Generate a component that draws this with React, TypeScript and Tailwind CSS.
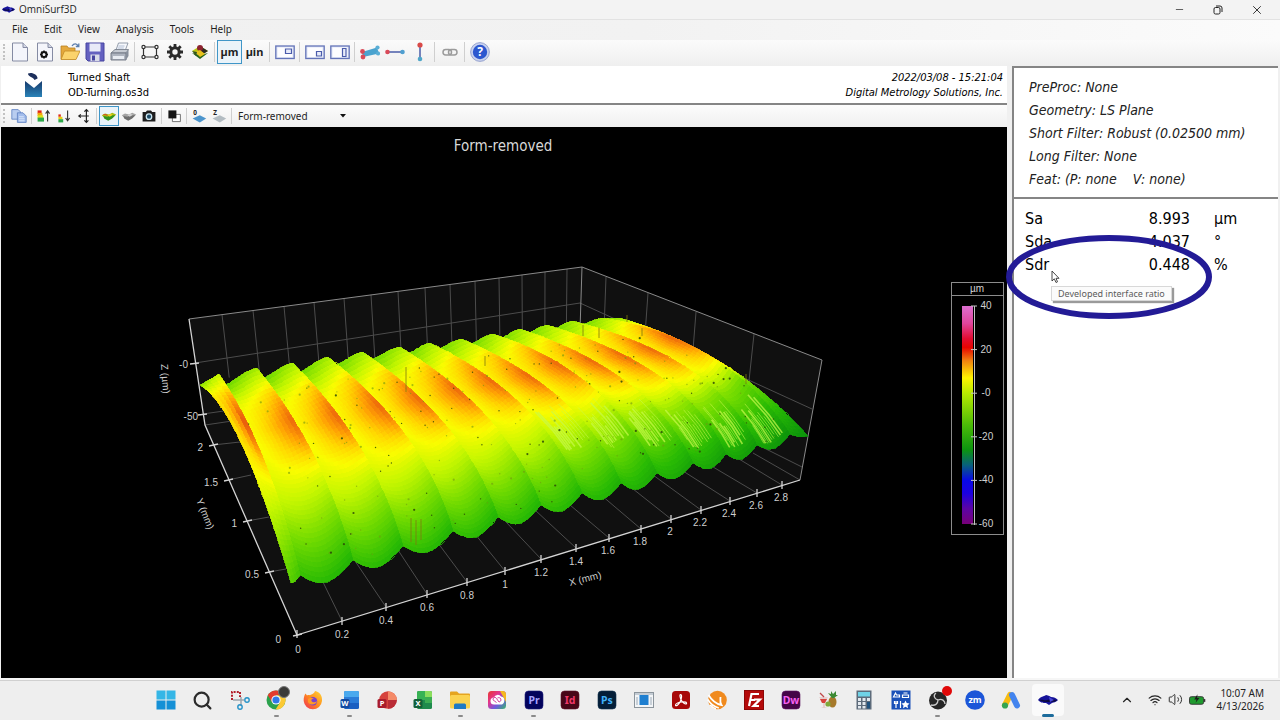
import { ReactNode } from "react";
import clsx from "clsx";
import { Minus, X, ChevronUp, Wifi, Volume2, Search } from "lucide-react";

const MENUS = ["File", "Edit", "View", "Analysis", "Tools", "Help"];

type Point = [number, number];

/* ---------- surface plot ---------- */

// back end, middle and front end of every crest line, left to right
const CRESTS: [Point, Point, Point][] = [
  [[200, 385], [243, 447], [291, 583]],
  [[219, 374], [264, 460], [300, 575]],
  [[257, 368], [314, 456], [353, 560]],
  [[293, 363], [361, 449], [403, 546]],
  [[328, 357], [407, 437], [453, 531]],
  [[363, 352], [448, 428], [498, 517]],
  [[400, 347], [488, 418], [541, 505]],
  [[430, 343], [524, 407], [582, 493]],
  [[462, 339], [563, 401], [621, 483]],
  [[493, 334], [592, 387], [657, 473]],
  [[520, 329], [629, 384], [693, 463]],
  [[547, 325], [662, 378], [726, 454]],
  [[573, 321], [690, 370], [757, 445]],
  [[603, 318], [711, 357], [790, 434]],
  [[620, 318], [722, 363], [808, 436]],
];

const RAMP: [number, number[]][] = [
  [-28, [14, 150, 10]],
  [-21, [40, 186, 4]],
  [-13, [112, 218, 0]],
  [-5, [196, 246, 0]],
  [1, [250, 252, 0]],
  [6, [255, 216, 0]],
  [12, [255, 160, 4]],
  [21, [230, 84, 14]],
];

const ALONG: Point[] = [
  [0, -9],
  [0.06, -5],
  [0.14, 1],
  [0.3, 4],
  [0.45, 2],
  [0.55, -1],
  [0.7, -7],
  [0.85, -14],
  [1, -21],
];

const BACK_TOPS = [222, 253, 284, 314, 344, 371, 398, 425, 450, 475, 499, 522, 545, 567];

const X_TICKS: { x: number; y: number; fx: number; fy: number; label: string }[] = [
  { x: 342, y: 621, fx: 322, fy: 580, label: "0.2" },
  { x: 386, y: 607, fx: 353, fy: 558, label: "0.4" },
  { x: 427, y: 594, fx: 398, fy: 550, label: "0.6" },
  { x: 467, y: 582, fx: 438, fy: 543, label: "0.8" },
  { x: 505, y: 571, fx: 475, fy: 534, label: "1" },
  { x: 541, y: 559, fx: 506, fy: 522, label: "1.2" },
  { x: 576, y: 548, fx: 535, fy: 510, label: "1.4" },
  { x: 609, y: 538, fx: 570, fy: 505, label: "1.6" },
  { x: 641, y: 529, fx: 601, fy: 495, label: "1.8" },
  { x: 671, y: 519, fx: 628, fy: 485, label: "2" },
  { x: 701, y: 510, fx: 653, fy: 475, label: "2.2" },
  { x: 730, y: 501, fx: 683, fy: 471, label: "2.4" },
  { x: 757, y: 493, fx: 708, fy: 464, label: "2.6" },
  { x: 782, y: 485, fx: 734, fy: 456, label: "2.8" },
];

const Y_TICKS: { x: number; y: number; fx: number; fy: number; label: string }[] = [
  { x: 297, y: 635, fx: 297, fy: 635, label: "0" },
  { x: 269, y: 572, fx: 286, fy: 569, label: "0.5" },
  { x: 247, y: 521, fx: 269, fy: 517, label: "1" },
  { x: 228, y: 480, fx: 251, fy: 475, label: "1.5" },
  { x: 213, y: 445, fx: 240, fy: 442, label: "2" },
];

const LEGEND_TICKS = ["40", "20", "-0", "-20", "-40", "-60"];

function noise(n: number) {
  const s = Math.sin(n * 127.1 + 11.7) * 43758.5453;
  return s - Math.floor(s);
}

function crestPoint(i: number, v: number): Point {
  const [a, m, b] = CRESTS[i];
  const at = (k: 0 | 1) => {
    const c = 2 * m[k] - (a[k] + b[k]) / 2;
    return (1 - v) * (1 - v) * a[k] + 2 * v * (1 - v) * c + v * v * b[k];
  };
  return [at(0), at(1)];
}

function surfacePoint(i: number, u: number, v: number): Point {
  const [x0, y0] = crestPoint(i, v);
  const [x1, y1] = crestPoint(i + 1, v);
  const edge = i === 0 || i === 13;
  // the groove starts behind the crest on its left and climbs to the one on its right
  const drop = edge ? 0 : 13 - i * 0.6;
  const front = edge ? 2 : 15 - i * 0.5;
  const hang = drop * Math.pow(1 - v, 1.5) * (1 + Math.cos(Math.PI * u)) * 0.5;
  const sag = front * v * Math.sin(Math.PI * u);
  return [x0 + (x1 - x0) * u, y0 + (y1 - y0) * u + hang + sag];
}

function interpolate(v: number, table: Point[]) {
  for (let k = 1; k < table.length; k++) {
    if (v <= table[k][0]) {
      const [a, fa] = table[k - 1];
      const [b, fb] = table[k];
      return fa + ((v - a) / (b - a)) * (fb - fa);
    }
  }
  return table[table.length - 1][1];
}

function heightAt(i: number, u: number, v: number) {
  const warm = Math.exp(-Math.pow((v - 0.31) / 0.18, 2));
  const side = i === 13 ? 0.9 : u;
  let h = interpolate(v, ALONG);
  h += warm * (18 * Math.pow(side, 1.5) - 3);
  if (v < 0.2) h -= (1 - u) * 6 * (1 - v / 0.2);
  if (v > 0.5) h += (0.5 - u) * 3 * Math.min(1, (v - 0.5) * 5);
  if (i > 6 && v > 0.5) h -= (i - 6) * Math.min(1, (v - 0.5) * 6);
  if (i === 0) h += 4;
  return h;
}

function rampColor(h: number) {
  const clamped = Math.max(-28, Math.min(21, h));
  for (let k = 1; k < RAMP.length; k++) {
    if (clamped <= RAMP[k][0]) {
      const [a, ca] = RAMP[k - 1];
      const [b, cb] = RAMP[k];
      const t = (clamped - a) / (b - a);
      return `rgb(${ca.map((c, n) => Math.round(c + (cb[n] - c) * t)).join(",")})`;
    }
  }
  return "rgb(230,84,14)";
}

function buildSurface() {
  const rows = 50;
  const cells: { d: string; fill: string }[] = [];
  for (let i = CRESTS.length - 2; i >= 0; i--) {
    const cols = i === 0 || i === 13 ? 4 : 12;
    for (let r = 0; r < rows; r++) {
      for (let c = 0; c < cols; c++) {
        const corners = [
          surfacePoint(i, c / cols, r / rows),
          surfacePoint(i, (c + 1) / cols, r / rows),
          surfacePoint(i, (c + 1) / cols, (r + 1) / rows),
          surfacePoint(i, c / cols, (r + 1) / rows),
        ];
        cells.push({
          d: corners.map((p) => p.map((n) => n.toFixed(1)).join(",")).join(" "),
          fill: rampColor(heightAt(i, (c + 0.5) / cols, (r + 0.5) / rows)),
        });
      }
    }
  }
  return cells;
}

function buildSpecks() {
  return Array.from({ length: 240 }, (_, n) => {
    const i = 1 + Math.floor(noise(n) * 12);
    const v = 0.12 + noise(n + 300) * 0.84;
    const [x, y] = surfacePoint(i, noise(n + 600) * 0.9 + 0.08, v);
    return { x, y, r: noise(n + 900) > 0.8 ? 1.1 : 0.7, dark: noise(n + 1200) > 0.6 };
  });
}

// pale scratches running down the right hand grooves
function buildScratches() {
  const out: { d: string; w: number }[] = [];
  for (let i = 7; i <= 12; i++) {
    for (let s = 0; s < 11; s++) {
      const u = 0.3 + s * 0.058;
      const shift = (i - 7) * 0.05;
      const from = 0.48 + shift + noise(i * 31 + s) * 0.14;
      const to = 0.69 + shift + noise(i * 57 + s) * 0.05;
      const pts = [from, (from + to) / 2, to].map((v) => surfacePoint(i, u, Math.min(v, 0.97)));
      out.push({
        d: "M" + pts.map((p) => p.map((n) => n.toFixed(1)).join(" ")).join("L"),
        w: noise(i * 13 + s) > 0.5 ? 1.6 : 0.8,
      });
    }
  }
  return out;
}

const SURFACE = buildSurface();
const SPECKS = buildSpecks();
const SCRATCHES = buildScratches();
const SPIKES = [
  [406, 367, 392],
  [485, 356, 366],
  [583, 325, 336],
  [599, 328, 338],
  [642, 328, 336],
  [627, 315, 322],
  [746, 374, 384],
  [411, 518, 542],
  [416, 520, 545],
  [421, 519, 540],
];

function SurfacePlot() {
  return (
    <svg
      viewBox="1 127 1006 551"
      className="block h-full w-full font-['Liberation_Sans',sans-serif]"
      role="img"
      aria-label="Form-removed surface"
    >
      <defs>
        <linearGradient id="scale" x1="0" y1="0" x2="0" y2="1">
          <stop offset="0" stopColor="#dd6fd0" />
          <stop offset="0.08" stopColor="#e0459c" />
          <stop offset="0.15" stopColor="#e00c30" />
          <stop offset="0.19" stopColor="#e60400" />
          <stop offset="0.25" stopColor="#f08010" />
          <stop offset="0.33" stopColor="#fff400" />
          <stop offset="0.4" stopColor="#b8ea00" />
          <stop offset="0.55" stopColor="#48ba08" />
          <stop offset="0.66" stopColor="#0c9410" />
          <stop offset="0.73" stopColor="#08607c" />
          <stop offset="0.8" stopColor="#0808e8" />
          <stop offset="0.86" stopColor="#1c00e0" />
          <stop offset="0.93" stopColor="#5c04a4" />
          <stop offset="1" stopColor="#780078" />
        </linearGradient>
      </defs>
      <text
        x="503"
        y="151"
        fill="#d8d8d8"
        fontSize="15"
        textAnchor="middle"
        className="font-['DejaVu_Sans_Condensed','Noto_Sans',sans-serif]"
      >
        Form-removed
      </text>

      <polygon points="189,319 582,267 822,360 800,480 297,635 205,425" fill="#101010" />
      <g stroke="#4c4c4c" strokeWidth="1">
        {BACK_TOPS.map((x) => {
          const t = (x - 189) / 393;
          return <line key={x} x1={x} y1={319 - 52 * t} x2={x + 9 * (1 - t) - 1} y2={382 - 52 * t} />;
        })}
        <line x1="195" y1="363" x2="580" y2="303" />
        <line x1="203" y1="414" x2="300" y2="400" />
        <line x1="205" y1="425" x2="300" y2="411" />
        <line x1="580" y1="303" x2="812" y2="409" />
        <line x1="606" y1="277" x2="604" y2="330" />
        <line x1="648" y1="293" x2="645" y2="335" />
        <line x1="696" y1="312" x2="693" y2="350" />
        <line x1="754" y1="334" x2="748" y2="390" />
        <line x1="760" y1="446" x2="802" y2="467" />
        <line x1="753" y1="453" x2="800" y2="480" />
        {X_TICKS.map((t) => (
          <line key={t.label} x1={t.fx} y1={t.fy} x2={t.x} y2={t.y} />
        ))}
        {Y_TICKS.map((t) => (
          <line key={t.label} x1={t.fx} y1={t.fy} x2={t.x} y2={t.y} />
        ))}
      </g>
      <g stroke="#8a8a8a" fill="none">
        <polyline points="189,319 582,267 822,360 800,480" />
        <line x1="582" y1="267" x2="580" y2="330" />
      </g>
      <g stroke="#d4d4d4" fill="none" strokeWidth="1.3">
        <polyline points="189,319 205,425 297,635 800,480" />
        <path d="M190 364l9 -1M198 415l9 -1" />
        {X_TICKS.map((t) => (
          <line key={t.label} x1={t.x} y1={t.y - 4} x2={t.x} y2={t.y + 4} />
        ))}
        <line x1="297" y1="630" x2="297" y2="638" />
        {Y_TICKS.map((t) => (
          <line key={t.label} x1={t.x - 4} y1={t.y + 1} x2={t.x + 5} y2={t.y - 1} />
        ))}
      </g>

      <g strokeWidth="0.8" shapeRendering="crispEdges">
        {SURFACE.map((c, n) => (
          <polygon key={n} points={c.d} fill={c.fill} stroke={c.fill} />
        ))}
      </g>
      <g fill="none" stroke="#c8fa4c" opacity="0.7">
        {SCRATCHES.map((s, n) => (
          <path key={n} d={s.d} strokeWidth={s.w} />
        ))}
      </g>
      {SPECKS.map((s, n) => (
        <circle key={n} cx={s.x} cy={s.y} r={s.r} fill={s.dark ? "#2c4a08" : "#6f9a10"} opacity={s.dark ? 0.85 : 0.6} />
      ))}
      <g stroke="#7d7a10" strokeWidth="0.8">
        {SPIKES.map(([x, y1, y2]) => (
          <line key={x} x1={x} y1={y1} x2={x} y2={y2} />
        ))}
      </g>

      <g fill="#cfcfcf" fontSize="10" textAnchor="middle">
        {X_TICKS.map((t, n) => (
          <text key={t.label} x={n > 6 ? t.x - 1 : t.x} y={n > 6 ? t.y + 16 : t.y + 17}>
            {t.label}
          </text>
        ))}
        <text x="298" y="653">
          0
        </text>
        <g textAnchor="end">
          {Y_TICKS.map((t) => (
            <text key={t.label} x={t.x - (t.label === "0" ? 16 : 10)} y={t.y + (t.label === "0" ? 8 : 6)}>
              {t.label}
            </text>
          ))}
          <text x="188" y="368">
            -0
          </text>
          <text x="198" y="420">
            -50
          </text>
        </g>
        <text transform="translate(162 379) rotate(86)">Z (µm)</text>
        <text transform="translate(202 515) rotate(68)">Y (mm)</text>
        <text transform="translate(586 582) rotate(-14)">X (mm)</text>
      </g>

      <g stroke="#8c8c8c" fill="none">
        <rect x="951.5" y="282.5" width="52" height="252" />
        <line x1="952" y1="295.5" x2="1003" y2="295.5" />
      </g>
      <rect x="962" y="306" width="11" height="218" fill="url(#scale)" />
      <g stroke="#c4c4c4">
        <line x1="974.5" y1="306" x2="974.5" y2="525" />
        {LEGEND_TICKS.map((label, n) => (
          <line key={label} x1="971" y1={306 + n * 43.6} x2="977" y2={306 + n * 43.6} />
        ))}
      </g>
      <g fill="#d0d0d0" fontSize="10" textAnchor="middle">
        <text x="977" y="292">
          µm
        </text>
        {LEGEND_TICKS.map((label, n) => (
          <text key={label} x="986" y={309 + n * 43.6}>
            {label}
          </text>
        ))}
      </g>
    </svg>
  );
}

/* ---------- toolbar glyphs ---------- */

function Glyph({ children, size = 20 }: { children: ReactNode; size?: number }) {
  return (
    <svg viewBox="0 0 20 20" width={size} height={size} className="block shrink-0" aria-hidden="true">
      {children}
    </svg>
  );
}

const page = (
  <>
    <path d="M2.5 1h10.5l4.500 4.500V19h-15z" fill="#f4f5fb" stroke="#858ba3" />
    <path d="M13 1v4.500h4.500" fill="#d5d8e6" stroke="#858ba3" />
  </>
);

const paneWindow = (
  <>
    <rect x="0.8" y="4" width="18.400" height="12.500" fill="#dfe5f6" stroke="#6474b8" strokeWidth="1.300" />
    <rect x="2.500" y="5.500" width="15" height="9.500" fill="#fdfdff" />
  </>
);

const gear = (
  <>
    <circle cx="10" cy="10" r="4.200" fill="none" stroke="#2a2a2a" strokeWidth="3" />
    <path
      d="M10 2v3M10 15v3M2 10h3M15 10h3M4.300 4.300l2.200 2.200M13.500 13.500l2.200 2.200M15.700 4.300l-2.200 2.200M6.500 13.500l-2.200 2.200"
      stroke="#2a2a2a"
      strokeWidth="2.800"
    />
  </>
);

const MAIN_TOOLS: ({ name: string; icon: ReactNode; active?: boolean } | null)[] = [
  { name: "New", icon: page },
  {
    name: "New from settings",
    icon: (
      <>
        {page}
        <circle cx="9" cy="12.500" r="2.500" fill="none" stroke="#111" strokeWidth="2" />
        <path
          d="M9 8.500v2M9 14.500v2M5 12.500h2M11 12.500h2M6.200 9.700l1.400 1.400M10.400 13.900l1.400 1.400M11.800 9.700l-1.400 1.400M7.600 13.900l-1.400 1.400"
          stroke="#111"
          strokeWidth="1.600"
        />
      </>
    ),
  },
  {
    name: "Open",
    icon: (
      <>
        <path d="M1 4h6l1.500 2H15v11H1z" fill="#e5a93c" stroke="#b98022" strokeWidth="0.8" />
        <path d="M4.500 9H20l-4 8.500H1z" fill="#fbd36c" stroke="#c28a26" strokeWidth="0.8" />
        <path d="M12 4c2-3 5-2.500 6 0M18.800 1.500V4.500h-3" fill="none" stroke="#5d7fae" strokeWidth="1.300" />
      </>
    ),
  },
  {
    name: "Save",
    icon: (
      <>
        <path d="M1 1h18v18H3l-2-2z" fill="#6461c0" stroke="#4644a0" />
        <rect x="4.500" y="1.500" width="11" height="8" fill="#e8eaf8" />
        <rect x="5.500" y="12.500" width="9" height="6.500" fill="#d9dbe8" />
        <rect x="7" y="13.500" width="3" height="5" fill="#4644a0" />
      </>
    ),
  },
  {
    name: "Print",
    icon: (
      <>
        <path d="M6 8l2.500-7H18l-3 8z" fill="#f6f8fc" stroke="#8a94a4" strokeWidth="0.900" />
        <path d="M8.500 4h6M7.800 6h6" stroke="#a9b8d0" strokeWidth="0.900" />
        <path d="M1 11l4-3.500h13.500l-2.500 3.500z" fill="#c5cad2" stroke="#78808c" strokeWidth="0.900" />
        <path d="M1 11h15v7H1z" fill="#aeb4bf" stroke="#6b7380" strokeWidth="0.900" />
        <path d="M16 11l2.500-3.500V14L16 18z" fill="#868e9b" />
        <rect x="3" y="14" width="11" height="3" fill="#e9edf3" />
      </>
    ),
  },
  null,
  {
    name: "Region",
    icon: (
      <g fill="#fff" stroke="#333" strokeWidth="1.200">
        <path d="M3.500 5h13v10h-13z" fill="none" />
        <circle cx="3.500" cy="5" r="1.600" />
        <circle cx="16.500" cy="5" r="1.600" />
        <circle cx="3.500" cy="15" r="1.600" />
        <circle cx="16.500" cy="15" r="1.600" />
      </g>
    ),
  },
  { name: "Settings", icon: gear },
  {
    name: "Surface",
    icon: (
      <>
        <path d="M2 9l8-5 8 5-8 5z" fill="#b9c714" />
        <path d="M2 11l8 6 8-6-8 2z" fill="#27631a" />
        <path d="M10 4l8 5-4 2.500-5-3z" fill="#2d2a22" />
        <circle cx="10" cy="6" r="3" fill="#8c2430" />
        <path d="M5 10l5-2 5 4-5 3z" fill="#e8c21c" />
        <path d="M2 9l5 1-1 4z" fill="#34561c" />
      </>
    ),
  },
  null,
  { name: "Micrometres", active: true, icon: "µm" },
  { name: "Microinches", icon: "µin" },
  null,
  {
    name: "Layout top",
    icon: (
      <>
        {paneWindow}
        <path d="M10.500 7h6v4.500h-6z" fill="#e8ecfa" stroke="#4b5cab" strokeWidth="1.200" />
      </>
    ),
  },
  null,
  {
    name: "Layout bottom",
    icon: (
      <>
        {paneWindow}
        <path d="M11.500 9.500h5v4.500h-5z" fill="#e8ecfa" stroke="#4b5cab" strokeWidth="1.200" />
      </>
    ),
  },
  {
    name: "Layout side",
    icon: (
      <>
        {paneWindow}
        <path d="M12.500 6.500h3.500v8h-3.500z" fill="#e8ecfa" stroke="#4b5cab" strokeWidth="1.200" />
      </>
    ),
  },
  null,
  {
    name: "Plane",
    icon: (
      <>
        <path d="M2 10L17 5.500l2 6L3 15z" fill="#4aa3cf" />
        <circle cx="2.500" cy="9.500" r="2.400" fill="#d94a58" />
        <circle cx="3" cy="15" r="2.400" fill="#d94a58" />
        <circle cx="17.500" cy="5.500" r="2.100" fill="#5aaed6" />
        <circle cx="18" cy="11.500" r="2.100" fill="#5aaed6" />
      </>
    ),
  },
  {
    name: "Horizontal line",
    icon: (
      <>
        <path d="M3 10h14" stroke="#4a5ca8" strokeWidth="1.500" />
        <circle cx="2.500" cy="10" r="2.300" fill="#d94a58" />
        <circle cx="17.500" cy="10" r="2.300" fill="#4f9fd0" />
      </>
    ),
  },
  {
    name: "Vertical line",
    icon: (
      <>
        <path d="M10 3v14" stroke="#4a5ca8" strokeWidth="1.500" />
        <circle cx="10" cy="3" r="2.600" fill="#d94a48" />
        <circle cx="10" cy="17" r="2.300" fill="#4fa6c8" />
      </>
    ),
  },
  null,
  {
    name: "Link",
    icon: (
      <g fill="none" stroke="#9b9b9b" strokeWidth="1.500">
        <rect x="3" y="7.500" width="8.500" height="5.500" rx="2.700" />
        <rect x="8.500" y="7.500" width="8.500" height="5.500" rx="2.700" />
      </g>
    ),
  },
  null,
  {
    name: "Help contents",
    icon: (
      <>
        <circle cx="10" cy="10" r="9.400" fill="#c9d2ee" stroke="#8895c6" strokeWidth="0.800" />
        <circle cx="10" cy="10" r="7.200" fill="#2c57cf" />
        <text x="10" y="14" fontSize="12" fontWeight="700" textAnchor="middle" fill="#fff">
          ?
        </text>
      </>
    ),
  },
];

const bars = (
  <>
    <path d="M2 3h5v4H2z" fill="#e02818" />
    <path d="M2 6h6v4H2z" fill="#f3a30c" />
    <path d="M2 9h7v4H2z" fill="#dde21a" />
    <path d="M2 12h8v5H2z" fill="#2ea84a" />
  </>
);

const VIEW_TOOLS: ({ name: string; icon: ReactNode; active?: boolean } | null)[] = [
  {
    name: "Copy",
    icon: (
      <g fill="#b9cdf0" stroke="#5b7dc0">
        <path d="M1 2h8l3 3v9H1z" />
        <path d="M8 6h7l4 4v8H8z" fill="#a3bdec" />
        <path d="M10 11h6M10 13.500h7M10 16h7" stroke="#eaf1fd" />
      </g>
    ),
  },
  null,
  {
    name: "Scale up",
    icon: (
      <>
        {bars}
        <path d="M14.500 17V4M12 7l2.500-3.500L17 7" fill="none" stroke="#333" strokeWidth="1.400" />
      </>
    ),
  },
  {
    name: "Scale down",
    icon: (
      <>
        <path d="M3 8h3v3H3z" fill="#e02818" />
        <path d="M3 11h5v3H3z" fill="#e8cf14" />
        <path d="M3 14h6v4H3z" fill="#2ea84a" />
        <path d="M14.500 3v13M12 12.500l2.500 3.500L17 12.500" fill="none" stroke="#333" strokeWidth="1.400" />
      </>
    ),
  },
  {
    name: "Fit height",
    icon: (
      <path
        d="M3 10h11M13 2v16M10.500 4.500L13 2l2.500 2.500M10.500 15.500L13 18l2.500-2.500M6 8l-2.500 2L6 12M13 10h3"
        fill="none"
        stroke="#222"
        strokeWidth="1.500"
      />
    ),
  },
  null,
  {
    name: "Coloured surface",
    active: true,
    icon: (
      <>
        <path d="M1 9l4-2 5 1 4-2 5 2-4 4-5 3-5-2z" fill="#a8ba10" />
        <path d="M3 10l5 1 4-2 6 0-4 4-5 3-5-3z" fill="#2f9420" />
        <path d="M8 9l4-1.500 3 1-4 2.500z" fill="#f0d020" />
        <path d="M3 8.500c2-1 4 0 5 1" stroke="#d4502a" strokeWidth="1.300" fill="none" />
      </>
    ),
  },
  {
    name: "Grey surface",
    icon: (
      <>
        <path d="M1 9l4-2 5 1 4-2 5 2-4 4-5 3-5-2z" fill="#a4a4a4" />
        <path d="M3 10l5 1 4-2 6 0-4 4-5 3-5-3z" fill="#6e6e6e" />
        <path d="M8 9l4-1.500 3 1-4 2.500z" fill="#d0d0d0" />
      </>
    ),
  },
  {
    name: "Snapshot",
    icon: (
      <>
        <path d="M2 5h4l1.500-2h5L14 5h4v12H2z" fill="#1e1e1e" />
        <circle cx="10" cy="10.800" r="4.200" fill="#cfe9f4" />
        <circle cx="10" cy="10.800" r="2.600" fill="#1c4a66" />
      </>
    ),
  },
  null,
  {
    name: "Background",
    icon: (
      <>
        <path d="M8 8h10v9H8z" fill="#fff" stroke="#555" />
        <path d="M3 3h10v10H3z" fill="#161616" />
      </>
    ),
  },
  null,
  {
    name: "Origin",
    icon: (
      <>
        <path d="M2 13l9-4 8 4-8 5z" fill="#4b94cc" />
        <text x="5" y="9" fontSize="8" fontWeight="700" textAnchor="middle" fill="#222">
          0
        </text>
      </>
    ),
  },
  {
    name: "Z zero",
    icon: (
      <>
        <path d="M2 13l9-4 8 4-8 5z" fill="#b3bcc2" />
        <text x="5" y="9" fontSize="8" fontWeight="700" textAnchor="middle" fill="#222">
          Z
        </text>
      </>
    ),
  },
  null,
];

function Separator({ height }: { height: string }) {
  return (
    <span className="flex w-[5px] justify-center">
      <span className={clsx("w-px bg-[#cfcfcf]", height)} />
    </span>
  );
}

function Grip() {
  return <span className="my-1 w-[2px] self-stretch border-l-2 border-dotted border-[#c2c2c2]" />;
}

function OmniMark({ size }: { size: number }) {
  return (
    <Glyph size={size}>
      <path d="M0 10c3-4 5-3 8-5 3 1 4 1 5 2 3 0 5 1 7 3-3 3-4 2-6 3l-3 2-3-2c-3 0-5 0-8-3z" fill="#17149a" />
      <path d="M1 10c4-1 5 1 8 0s5-1 10 0c-3 3-5 1-8 2-4 0-6 0-10-2z" fill="#0c0a3c" />
      <path d="M11 7l5 3-4 2z" fill="#4b48d8" />
    </Glyph>
  );
}

/* ---------- taskbar ---------- */

function LetterTile({ text, fill, color, border }: { text: string; fill: string; color: string; border: string }) {
  return (
    <Glyph>
      <rect x="1" y="1" width="18" height="18" rx="3.500" fill={fill} stroke={border} strokeWidth="0.600" />
      <text x="10" y="14" fontSize="10.500" fontWeight="700" textAnchor="middle" fill={color}>
        {text}
      </text>
    </Glyph>
  );
}

function OfficeTile({ letter, badge, children }: { letter: string; badge: string; children: ReactNode }) {
  return (
    <Glyph>
      {children}
      <rect x="0.500" y="9" width="9" height="9" rx="1.500" fill={badge} />
      <text x="5" y="16" fontSize="7.500" fontWeight="700" textAnchor="middle" fill="#fff">
        {letter}
      </text>
    </Glyph>
  );
}

const APPS: { name: string; running?: boolean; active?: boolean; icon: ReactNode }[] = [
  {
    name: "Start",
    icon: (
      <Glyph>
        <path d="M0.500 0.500h9v9h-9zM10.500 0.500h9v9h-9z" fill="#35b6e6" />
        <path d="M0.500 10.500h9v9h-9zM10.500 10.500h9v9h-9z" fill="#1590d6" />
      </Glyph>
    ),
  },
  { name: "Search", icon: <Search size={21} strokeWidth={2.5} color="#2b2b2b" /> },
  {
    name: "Snipping Tool",
    icon: (
      <Glyph>
        <path d="M2 10V2h8v5" fill="none" stroke="#b3202c" strokeWidth="2" strokeDasharray="2 1.200" />
        <path d="M3 10h11M11 7v9" fill="none" stroke="#9aa6ae" strokeWidth="1.500" />
        <circle cx="17" cy="10" r="2.200" fill="none" stroke="#2793c8" strokeWidth="1.400" />
        <circle cx="10" cy="17" r="2.200" fill="none" stroke="#2793c8" strokeWidth="1.400" />
      </Glyph>
    ),
  },
  {
    name: "Chrome",
    running: true,
    icon: (
      <span className="relative block">
        <Glyph>
          <circle cx="10" cy="10" r="9.500" fill="#2ba24c" />
          <path d="M1.800 5.200A9.500 9.500 0 0 1 18.200 5.200H10L6 12z" fill="#e33b2e" />
          <path d="M18.200 5.200A9.500 9.500 0 0 1 9.500 19.500L14 12.500 10 5.200z" fill="#fcc934" />
          <circle cx="10" cy="10" r="4.600" fill="#fff" />
          <circle cx="10" cy="10" r="3.600" fill="#3079e8" />
        </Glyph>
        <span className="absolute -top-1 -right-1 h-3 w-3 rounded-full border border-[#777] bg-[#3a3a38]" />
      </span>
    ),
  },
  {
    name: "Firefox",
    icon: (
      <Glyph>
        <defs>
          <linearGradient id="fox" x1="1" y1="0" x2="0" y2="1">
            <stop offset="0" stopColor="#ffd83a" />
            <stop offset="0.500" stopColor="#ff8a1c" />
            <stop offset="1" stopColor="#ee2a5c" />
          </linearGradient>
        </defs>
        <path d="M12 1c5 1 7.500 5 7 10a9.200 9.200 0 0 1-18.300 0C.5 8 1.200 5.500 2.500 3.500L4 5.500C5 5 6 5 7 5.200 9 4 11 4 12 1z" fill="url(#fox)" />
        <circle cx="10" cy="11.200" r="4.200" fill="#7a43cc" />
        <path d="M5 9c2-2 4-1.500 6-.5-2 0-3 1-2.500 2.500 1 2 4 1.500 5.500 0-.5 4-7 5-9 1z" fill="#ff9a24" />
      </Glyph>
    ),
  },
  {
    name: "Word",
    running: true,
    icon: (
      <OfficeTile letter="W" badge="#12489f">
        <rect x="4" y="1" width="15" height="18" rx="1.500" fill="#1b5fc1" />
        <path d="M4 7V2.500Q4 1 5.500 1h12Q19 1 19 2.500V7z" fill="#4aa9ee" />
        <path d="M4 7h15v6H4z" fill="#2b7cd8" />
      </OfficeTile>
    ),
  },
  {
    name: "PowerPoint",
    icon: (
      <OfficeTile letter="P" badge="#a81c2c">
        <circle cx="11" cy="10" r="8.800" fill="#d6423c" />
        <path d="M11 1.200A8.800 8.800 0 0 1 19.800 10H11z" fill="#f48a68" />
        <path d="M11 10h8.800A8.800 8.800 0 0 1 11 18.800z" fill="#b92c36" />
      </OfficeTile>
    ),
  },
  {
    name: "Excel",
    icon: (
      <OfficeTile letter="X" badge="#136038">
        <rect x="4" y="1" width="15" height="18" rx="1.500" fill="#1f8a4c" />
        <path d="M4 2.500Q4 1 5.500 1H12v9H4z" fill="#37b254" />
        <path d="M12 1h5.500Q19 1 19 2.500V7h-7z" fill="#8add5c" />
        <path d="M12 7h7v6h-7z" fill="#3cad52" />
      </OfficeTile>
    ),
  },
  {
    name: "File Explorer",
    running: true,
    icon: (
      <Glyph>
        <path d="M0 2.500Q0 1.500 1 1.500h6l2 2h10q1 0 1 1V10H0z" fill="#e5a420" />
        <rect x="0" y="5" width="20" height="13.500" rx="1.500" fill="#fbd250" />
        <path d="M4 19v-4q0-1.500 1.500-1.500h9Q16 13.500 16 15v4z" fill="#1f7ac4" />
      </Glyph>
    ),
  },
  {
    name: "Creative Cloud",
    icon: (
      <Glyph>
        <defs>
          <linearGradient id="cc" x1="0" y1="0" x2="1" y2="1">
            <stop offset="0" stopColor="#e8372c" />
            <stop offset="0.350" stopColor="#e3358d" />
            <stop offset="0.650" stopColor="#6f5ae0" />
            <stop offset="1" stopColor="#35b866" />
          </linearGradient>
        </defs>
        <rect x="1" y="1" width="18" height="18" rx="3.500" fill="url(#cc)" />
        <path d="M13 1h2.500Q19 1 19 4.500V12z" fill="#f6b91e" />
        <path d="M7 14.500a3.500 3.500 0 0 1 0-7 4 4 0 0 1 7-1 4 4 0 0 1-1.500 8z" fill="#fff" />
        <path d="M9.500 12.500L7.500 11a1.800 1.800 0 1 1 2-2.500l2.500 3.500a2.200 2.200 0 1 0-1.500-4" fill="none" stroke="#d23a9c" strokeWidth="1" />
      </Glyph>
    ),
  },
  { name: "Premiere Pro", running: true, icon: <LetterTile text="Pr" fill="#03035c" color="#a5a2ff" border="#1c1c78" /> },
  { name: "InDesign", icon: <LetterTile text="Id" fill="#480618" color="#f0386a" border="#5c1228" /> },
  { name: "Photoshop", icon: <LetterTile text="Ps" fill="#041e38" color="#40b0fa" border="#10304c" /> },
  {
    name: "Viewer",
    icon: (
      <Glyph>
        <rect x="0.500" y="2.500" width="19" height="15" fill="#f3f5f7" stroke="#8b949c" />
        <path d="M1 5V3h18v2z" fill="#c4ccd4" />
        <rect x="5.500" y="5" width="9" height="10" fill="#1f7fd0" />
        <path d="M2 7h2v8H2zM16 7h2v8h-2z" fill="#c8d0d8" />
      </Glyph>
    ),
  },
  {
    name: "Acrobat",
    icon: (
      <Glyph>
        <rect x="1" y="1" width="18" height="18" rx="3.500" fill="#a80808" />
        <path
          d="M9.500 4.500c2 0 .8 5-.5 7.500-1.500 3-4 4.500-4.500 3.200-.5-1.600 4-3.200 6.500-3.400 3-.2 5 .6 4.500 1.800-.8 1.200-4-1-5.300-3.600C9 7.500 8.500 4.600 9.500 4.500z"
          fill="none"
          stroke="#fff"
          strokeWidth="1.200"
        />
      </Glyph>
    ),
  },
  {
    name: "Orange swirl",
    icon: (
      <Glyph>
        <circle cx="10.500" cy="10" r="9.300" fill="#f08a1e" />
        <path d="M1.500 5c3 5 8 9 13 10-2-3-1-6-1-8" fill="none" stroke="#fff" strokeWidth="1.800" />
        <path d="M0.800 9.500c3 5 7 7.500 11 8.500M3 15c2 2 4 3.500 6 4" fill="none" stroke="#fff" strokeWidth="1.500" />
      </Glyph>
    ),
  },
  {
    name: "FileZilla",
    icon: (
      <Glyph>
        <rect x="0.500" y="0.500" width="19" height="19" fill="#b40a0a" stroke="#8c0606" />
        <path d="M5 16L7.500 4H15M6 10h5M10 9.500h6L9.500 16H15" fill="none" stroke="#fff" strokeWidth="2.200" />
      </Glyph>
    ),
  },
  { name: "Dreamweaver", icon: <LetterTile text="Dw" fill="#450548" color="#f560f0" border="#5a1460" /> },
  {
    name: "Fruit",
    icon: (
      <Glyph>
        <ellipse cx="14.500" cy="12" rx="4" ry="5.500" fill="#a6792a" />
        <path d="M14 8l-4-5 3 1 0-3 2 3 3-3v4l2 0-4 3z" fill="#3c8a34" />
        <path d="M1 7h9l-3 6v4l2 1H3l2-1v-4z" fill="#e6cfcf" />
        <path d="M2 9h7l-2 4H4z" fill="#d8433c" />
        <circle cx="10" cy="14" r="2.600" fill="#7fa83a" />
        <path d="M2 3l4 4" stroke="#c04848" strokeWidth="1.200" />
      </Glyph>
    ),
  },
  {
    name: "Calculator",
    icon: (
      <Glyph>
        <rect x="2.500" y="0.500" width="15" height="19" fill="#5d6b7a" />
        <rect x="4" y="2" width="12" height="4.500" fill="#6fd2e6" />
        <path d="M4 8h3v3H4zM8.500 8h3v3h-3zM4 12h3v3H4zM8.500 12h3v3h-3zM4 16h3v2.500H4zM8.500 16h3v2.500h-3zM13 8h3v3h-3z" fill="#e2e8ee" />
        <rect x="13" y="12" width="3" height="6.500" fill="#20527e" />
      </Glyph>
    ),
  },
  {
    name: "Utilities",
    icon: (
      <Glyph>
        <rect x="0.500" y="0.500" width="19" height="19" fill="#1a50b8" />
        <path d="M2.500 7h6v-2h-3l-1-2zM12.500 3h4M11.500 5h6v2.500h-6zM5 11v7M3.500 11v2.500h3V11M9.500 11v7" fill="none" stroke="#fff" strokeWidth="1.200" />
        <path d="M14.500 10.500l1.200 2.600 2.800.3-2 2 .5 2.800-2.500-1.400-2.500 1.400.5-2.800-2-2 2.800-.3z" fill="#fff" />
      </Glyph>
    ),
  },
  {
    name: "OBS Studio",
    running: true,
    icon: (
      <span className="relative block">
        <Glyph>
          <circle cx="10" cy="10.500" r="9" fill="#262626" />
          <g fill="none" stroke="#c9c9c9" strokeWidth="1.300">
            <path d="M10 10C6 9 5 5 8 3M10 10c4-2 7 1 7 4M10 10c0 4-3 6-7 5" />
          </g>
        </Glyph>
        <span className="absolute -top-1 -right-1 h-2.5 w-2.5 rounded-full bg-[#e00808]" />
      </span>
    ),
  },
  {
    name: "Zoom",
    icon: (
      <Glyph>
        <circle cx="10" cy="10" r="9.800" fill="#1c56d8" />
        <text x="10" y="13" fontSize="9" fontWeight="700" textAnchor="middle" fill="#fff">
          zm
        </text>
      </Glyph>
    ),
  },
  {
    name: "Google Ads",
    icon: (
      <Glyph>
        <path d="M9 5L4 15" stroke="#f8bc10" strokeWidth="6" strokeLinecap="round" />
        <path d="M11 5l5 10.500" stroke="#4384ee" strokeWidth="6" strokeLinecap="round" />
        <circle cx="4" cy="15.500" r="3.100" fill="#34a552" />
      </Glyph>
    ),
  },
  { name: "OmniSurf3D", active: true, icon: <OmniMark size={20} /> },
];

function Taskbar() {
  return (
    <footer className="flex h-10 shrink-0 items-stretch border-t border-[#d0d0d0] bg-[#eeeeee] pb-0.5 pl-[150px] pr-4">
      <nav aria-label="Taskbar" className="flex w-[914px] shrink-0 items-center justify-between pt-px">
        {APPS.map((app) => (
          <button
            key={app.name}
            type="button"
            aria-label={app.name}
            className={clsx(
              "relative flex h-8 w-8 items-center justify-center rounded-sm",
              app.active && "bg-[#fafafa]",
            )}
          >
            {app.icon}
            {app.running && <span className="absolute -bottom-px h-[2px] w-[5px] rounded bg-[#8a8a8a]" />}
            {app.active && <span className="absolute -bottom-px h-[3px] w-3 rounded bg-[#1d6c9c]" />}
          </button>
        ))}
      </nav>
      <div className="ml-auto flex items-center gap-1.5 text-[#222]">
        <ChevronUp size={14} className="mr-2" />
        <Wifi size={14} />
        <Volume2 size={15} strokeWidth={1.5} />
        <svg viewBox="0 0 18 12" width="17" height="12" aria-hidden="true">
          <rect x="0.500" y="2.500" width="15" height="8" rx="2" fill="#1f9a2e" stroke="#333" />
          <path d="M16.500 5v3" stroke="#333" strokeWidth="1.500" />
          <path d="M9 0L5.500 5.500H8L7 9l4-5H8.500z" fill="#1b1b1b" />
        </svg>
        <div className="ml-1 w-12 text-right text-[10px] leading-[13px]">
          <div className="whitespace-nowrap">10:07 AM</div>
          <div>4/13/2026</div>
        </div>
      </div>
    </footer>
  );
}

/* ---------- panels ---------- */

const FILTERS = [
  "PreProc: None",
  "Geometry: LS Plane",
  "Short Filter: Robust (0.02500 mm)",
  "Long Filter: None",
  "Feat: (P: none    V: none)",
];

const RESULTS = [
  { name: "Sa", value: "8.993", unit: "µm" },
  { name: "Sda", value: "4.037", unit: "°" },
  { name: "Sdr", value: "0.448", unit: "%" },
];

function ResultsPanel() {
  return (
    <aside className="relative flex w-[266px] shrink-0 flex-col border-l-2 border-t-2 border-[#858585] bg-white font-['DejaVu_Sans_Condensed','Noto_Sans',sans-serif]">
      <ul className="border-b-2 border-[#858585] pt-2 pb-1.5 pl-[15px] text-sm italic leading-[23px] text-[#222]">
        {FILTERS.map((line) => (
          <li key={line} className="whitespace-pre">
            {line}
          </li>
        ))}
      </ul>
      <table className="mt-2 w-[224px] text-left text-base leading-[23px] text-black">
        <tbody>
          {RESULTS.map((r) => (
            <tr key={r.name}>
              <th scope="row" className="w-16 pl-[11px] font-normal">
                {r.name}
              </th>
              <td className="pr-6 text-right">{r.value}</td>
              <td className="w-6">{r.unit}</td>
            </tr>
          ))}
        </tbody>
      </table>
      <svg
        viewBox="0 0 208 86"
        width="208"
        height="86"
        className="absolute -left-2 top-[166px]"
        aria-hidden="true"
      >
        <ellipse cx="103" cy="43" rx="100" ry="39" fill="none" stroke="#231b96" strokeWidth="6" />
      </svg>
      <div
        role="tooltip"
        className="absolute left-[37px] top-[218px] whitespace-nowrap border border-[#d8d8d8] bg-[#fbfbfb] px-1.5 font-['Noto_Sans',sans-serif] text-[9px] leading-[13px] text-[#5c5c5c] shadow-[2px_2px_1px_#9a9a9a]"
      >
        Developed interface ratio
      </div>
      <svg viewBox="0 0 9 14" width="9" height="14" className="absolute left-[37px] top-[202px]" aria-hidden="true">
        <path d="M1 1v10l2.300-2.200L5 12.500l1.500-.7L5 8.300h3z" fill="#fff" stroke="#333" strokeWidth="0.900" />
      </svg>
    </aside>
  );
}

function Logo() {
  return (
    <svg viewBox="0 0 20 26" width="20" height="26" className="ml-[23px] mr-6 shrink-0" aria-hidden="true">
      <defs>
        <linearGradient id="logo" x1="0" y1="0" x2="0" y2="1">
          <stop offset="0" stopColor="#173a6c" />
          <stop offset="1" stopColor="#2a83b8" />
        </linearGradient>
      </defs>
      <path d="M1 9l9 7 8-7v16H1z" fill="url(#logo)" />
      <path d="M4 1.500C8-.5 14 3 13.500 6.500L10.500 8C9.500 5 4 5 4 1.500z" fill="#1d2f5c" />
    </svg>
  );
}

export default function App() {
  return (
    <div className="flex h-screen flex-col overflow-hidden bg-[#f0f0f0] font-['Noto_Sans',sans-serif] text-[#1f1f1f]">
      <header className="flex h-5 shrink-0 items-center border-b border-[#e2e2e2] bg-[#f3f3f3] pl-0.5 text-[10px]">
        <OmniMark size={13} />
        <h1 className="ml-1 font-['Open_Sans','Noto_Sans',sans-serif]">OmniSurf3D</h1>
        <div className="ml-auto flex items-center pr-[15px]">
          <button type="button" aria-label="Minimize" className="flex w-10 justify-center">
            <Minus size={11} strokeWidth={1.5} />
          </button>
          <button type="button" aria-label="Restore" className="flex w-[38px] justify-center">
            <svg viewBox="0 0 10 10" width="10" height="10" fill="none" stroke="#222">
              <rect x="1" y="2.500" width="6" height="6.500" rx="1.500" />
              <path d="M3 1h4q2 0 2 2v4" />
            </svg>
          </button>
          <button type="button" aria-label="Close" className="-mr-3 flex w-10 justify-center">
            <X size={14} strokeWidth={1.5} />
          </button>
        </div>
      </header>

      <nav
        aria-label="Menu"
        className="flex h-5 shrink-0 items-center gap-4 bg-linear-to-r from-[#f0f0f0] via-[#f2f2f2] to-[#fbfbfb] pb-0.5 pl-3 text-[10px]"
      >
        {MENUS.map((m) => (
          <button key={m} type="button">
            {m}
          </button>
        ))}
      </nav>

      <div
        className="flex h-[26px] shrink-0 items-center bg-linear-to-b from-[#fbfbfb] to-[#efefef] pb-0.5 pl-[3px]"
        role="toolbar"
      >
        <Grip />
        <span className="w-0.5" />
        {MAIN_TOOLS.map((tool, n) =>
          tool ? (
            <button
              key={tool.name}
              type="button"
              aria-label={tool.name}
              className={clsx(
                "flex h-6 w-[25px] items-center justify-center text-[11px] font-bold",
                tool.active && "border border-[#3f96c8] bg-[#eaf3f9]",
              )}
            >
              {typeof tool.icon === "string" ? tool.icon : <Glyph>{tool.icon}</Glyph>}
            </button>
          ) : (
            <Separator key={n} height="h-5" />
          ),
        )}
      </div>

      <div className="flex min-h-0 flex-1 pl-px pr-0.5">
        <main className="flex min-w-0 flex-1 flex-col">
          <section className="flex h-[37px] shrink-0 items-center bg-white font-['DejaVu_Sans_Condensed','Noto_Sans',sans-serif] text-[11px] leading-[15px] text-black">
            <Logo />
            <div>
              <div>Turned Shaft</div>
              <div>OD-Turning.os3d</div>
            </div>
            <div className="ml-auto pr-1 text-right italic">
              <div>2022/03/08 - 15:21:04</div>
              <div>Digital Metrology Solutions, Inc.</div>
            </div>
          </section>
          <div
            className="flex h-6 shrink-0 items-center border-t-2 border-[#858585] bg-linear-to-b from-[#fcfcfc] to-[#f0f0f0] pl-0.5"
            role="toolbar"
          >
            <Grip />
            <span className="w-1" />
            {VIEW_TOOLS.map((tool, n) =>
              tool ? (
                <button
                  key={tool.name}
                  type="button"
                  aria-label={tool.name}
                  className={clsx(
                    "flex h-5 w-5 items-center justify-center",
                    tool.active && "border border-[#3f96c8] bg-[#eaf3f9]",
                  )}
                >
                  <Glyph size={16}>{tool.icon}</Glyph>
                </button>
              ) : (
                <Separator key={n} height="h-4" />
              ),
            )}
            <div className="relative flex items-center">
              <select
                aria-label="Surface shown"
                className="w-[116px] appearance-none bg-transparent pl-1 text-[10px] leading-4"
                defaultValue="Form-removed"
              >
                <option>Form-removed</option>
              </select>
              <svg viewBox="0 0 6 4" width="6" height="4" className="pointer-events-none absolute right-1" aria-hidden="true">
                <path d="M0 0h6L3 3.500z" fill="#111" />
              </svg>
            </div>
          </div>
          <div className="min-h-0 flex-1 bg-black">
            <SurfacePlot />
          </div>
        </main>
        <div className="w-[5px] shrink-0" />
        <ResultsPanel />
      </div>
      <div className="h-0.5 shrink-0 bg-[#f6f6f6]" />
      <Taskbar />
    </div>
  );
}
